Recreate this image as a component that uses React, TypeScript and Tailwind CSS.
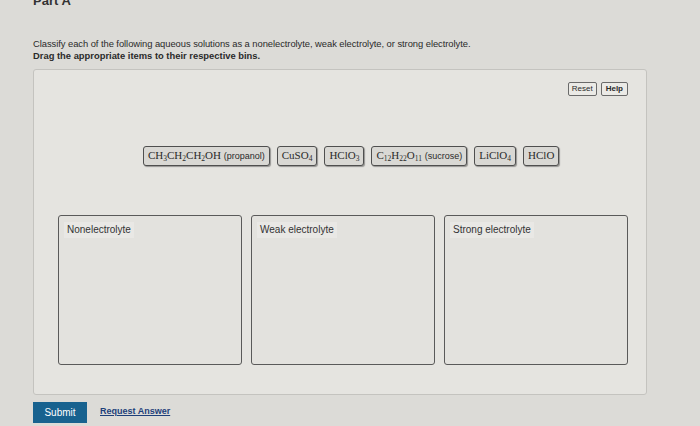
import React from "react";

const items = [
  { key: "propanol", node: <span>CH<sub>3</sub>CH<sub>2</sub>CH<sub>2</sub>OH <span className="font-['Liberation_Sans',sans-serif] text-[9px]">(propanol)</span></span> },
  { key: "cuso4", node: <span>CuSO<sub>4</sub></span> },
  { key: "hclo3", node: <span>HClO<sub>3</sub></span> },
  { key: "sucrose", node: <span>C<sub>12</sub>H<sub>22</sub>O<sub>11</sub> <span className="font-['Liberation_Sans',sans-serif] text-[9px]">(sucrose)</span></span> },
  { key: "liclo4", node: <span>LiClO<sub>4</sub></span> },
  { key: "hclo", node: <span>HClO</span> },
];

const bins = ["Nonelectrolyte", "Weak electrolyte", "Strong electrolyte"];

export default function App() {
  return (
    <div className="w-[700px] h-[426px] overflow-hidden bg-[#dcdbd7] font-['Liberation_Sans',Arial,sans-serif] text-[#2a2a2a]">
      <div className="px-[33px]">
        <p className="-mt-[9px] text-[13px] font-bold text-[#333]">Part A</p>
        <p className="mt-[27px] text-[9.4px] leading-[12px] tracking-[-0.05px]">
          Classify each of the following aqueous solutions as a nonelectrolyte, weak electrolyte, or strong electrolyte.
        </p>
        <p className="text-[9.4px] leading-[12px] font-bold">Drag the appropriate items to their respective bins.</p>

        <div className="mt-[7px] w-[614px] h-[326px] border border-[#c4c3bf] rounded-[3px] bg-[#e5e4e0] pl-[24px] pr-[18px] pt-[12px]">
          <div className="flex justify-end gap-[4px]">
            <button className="h-[14px] px-[3px] text-[8px] leading-[12px] border border-[#6a6a6a] rounded-[2px] bg-[#ebeae6]">Reset</button>
            <button className="h-[14px] px-[4px] text-[8px] leading-[12px] font-bold border border-[#6a6a6a] rounded-[2px] bg-[#ebeae6]">Help</button>
          </div>

          <div className="mt-[50px] ml-[85px] flex gap-[7px]">
            {items.map((it) => (
              <div
                key={it.key}
                className="h-[20px] px-[4px] flex items-center whitespace-nowrap border border-[#4f4f4f] rounded-[3px] bg-[#d9d8d4] shadow-[1px_1px_1px_rgba(0,0,0,0.35)] font-['Liberation_Serif',serif] text-[11px] leading-none [&_sub]:text-[7.5px]"
              >
                {it.node}
              </div>
            ))}
          </div>

          <div className="mt-[49px] grid grid-cols-3 gap-[9px]">
            {bins.map((b) => (
              <div key={b} className="h-[150px] border-[1.5px] border-[#5a5a5a] rounded-[3px] bg-[#e3e2de]">
                <span className="inline-block mt-[3px] ml-[5px] px-[3px] py-[2px] bg-[#e9e8e5] text-[10px] leading-[12px] text-[#333]">{b}</span>
              </div>
            ))}
          </div>
        </div>

        <div className="mt-[7px] flex items-center gap-[13px]">
          <button className="w-[54px] h-[21px] bg-[#18628f] text-white text-[10px]">Submit</button>
          <a className="text-[9px] font-bold text-[#1e3f7a] underline">Request Answer</a>
        </div>
      </div>
    </div>
  );
}
